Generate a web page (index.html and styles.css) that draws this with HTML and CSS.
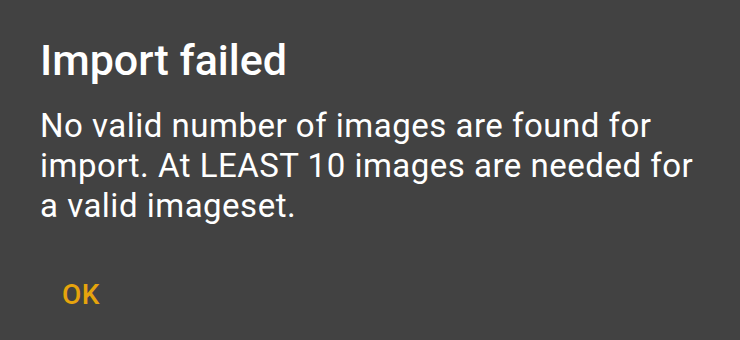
FILE: index.html
```html
<!DOCTYPE html>
<html>
<head>
<meta charset="utf-8">
<link rel="stylesheet" href="styles.css">
</head>
<body>
<div class="dialog">
  <h1 class="title">Import failed</h1>
  <p class="message">No valid number of images are found for import. At LEAST 10 images are needed for a valid imageset.</p>
  <div class="actions">
    <button class="btn">OK</button>
  </div>
</div>
</body>
</html>
```

FILE: styles.css
```css
html, body {
  margin: 0;
  padding: 0;
  background: #424242;
}
body {
  width: 740px;
  height: 340px;
  overflow: hidden;
  font-family: Roboto, "Noto Sans", sans-serif;
}
.dialog {
  padding: 34px 40px 0 40px;
}
.title {
  margin: 0;
  font-size: 43px;
  font-weight: 500;
  line-height: 52px;
  color: #ffffff;
}
.message {
  margin: 20px 0 0 0;
  width: 660px;
  font-size: 33px;
  line-height: 40px;
  letter-spacing: 0.5px;
  color: #ffffff;
}
.actions {
  display: flex;
  margin-top: 52px;
}
.btn {
  background: none;
  border: none;
  padding: 0 0 0 22px;
  font-family: Roboto, sans-serif;
  font-weight: 500;
  font-size: 28px;
  color: #e6a40c;
  letter-spacing: 0.5px;
}
```
